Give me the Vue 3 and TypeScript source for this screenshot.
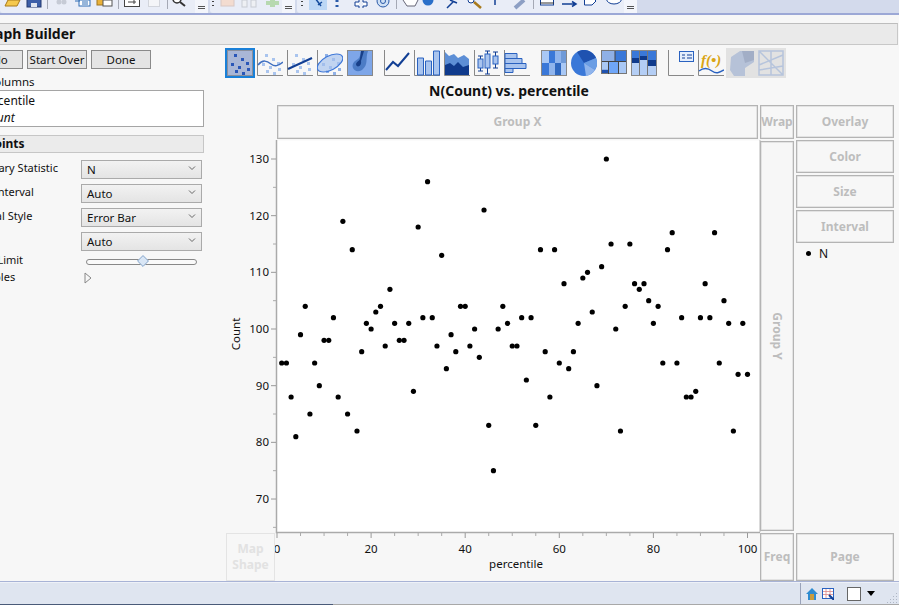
<script setup lang="ts">
const values: number[] = [94,94,88,81,99,104,85,94,90,98,98,102,88,119,85,114,82,96,101,100,103,104,97,107,101,98,98,101,89,118,102,126,102,97,113,93,99,96,104,104,97,100,95,121,83,75,100,104,101,97,97,102,91,102,83,114,96,88,114,94,108,93,96,101,109,110,103,90,111,130,115,100,82,104,115,108,107,108,105,101,104,94,114,117,94,102,88,88,89,102,108,102,117,94,105,101,82,92,101,92]
const px = (v: number) => 51 + v * 4.705
const py = (v: number) => 19 + (130 - v) * 5.667
const dots = values.map((v, i) => ({ x: px(i + 1), y: py(v) }))
const xMajor = [0, 20, 40, 60, 80, 100]
const xMinor = [5, 10, 15, 25, 30, 35, 45, 50, 55, 65, 70, 75, 85, 90, 95]
const yMajor = [70, 80, 90, 100, 110, 120, 130]
const yMinor = [65, 75, 85, 95, 105, 115, 125]
const selects = ['N', 'Auto', 'Error Bar', 'Auto']
const rowLabels = ['Summary Statistic', 'Error Interval', 'Interval Style', '']
const scatter: [number, number][] = [[8,5],[15,9],[5,14],[12,17],[20,13],[9,21],[16,23],[21,19]]
const stackSide = ['Overlay', 'Color', 'Size', 'Interval']
</script>

<template>
  <div class="app">
    <header class="toolbar">
      <div class="tb-group g1">
        <svg width="195" height="13" viewBox="0 0 195 13">
          <path d="M5 6 L8 0 H20 L17 6Z" fill="#f5c94e" stroke="#a87a1c"/>
          <rect x="27" y="-4" width="14" height="11" fill="#3d5fa8" stroke="#22386e"/>
          <rect x="31" y="3" width="6" height="4" fill="#dfe5f0"/>
          <line x1="47.5" y1="0" x2="47.5" y2="9" stroke="#a5a9b5"/>
          <circle cx="59" cy="2" r="2.5" fill="#c6cbd6"/><circle cx="64" cy="2" r="2.5" fill="#c6cbd6"/>
          <rect x="79" y="0" width="11" height="6" fill="#fff" stroke="#2f6db5"/><path d="M75 1H80M82 2H88M82 4H88" stroke="#2f6db5"/>
          <rect x="97" y="-3" width="8" height="8" fill="#eab23a" stroke="#a07620"/><rect x="103" y="0" width="9" height="6" fill="#fff" stroke="#555"/>
          <line x1="118.5" y1="0" x2="118.5" y2="9" stroke="#a5a9b5"/>
          <rect x="124.5" y="-3" width="15" height="9.500" fill="#fff" stroke="#444"/><path d="M128 2H136M134 0V4" stroke="#444"/>
          <rect x="148.500" y="-3" width="11" height="9.500" fill="#f4f5f8" stroke="#d2d5dc"/>
          <line x1="167.500" y1="0" x2="167.500" y2="9" stroke="#a5a9b5"/>
          <circle cx="177" cy="-1" r="4" fill="#fff" stroke="#333" stroke-width="1.500"/><path d="M180 2L185 6" stroke="#333" stroke-width="2"/>
        </svg>
        <span class="more"></span>
      </div>
      <div class="tb-group g2">
        <svg width="72" height="13" viewBox="0 0 72 13">
          <path d="M3 1V2M3 5V6" stroke="#444" stroke-width="2"/>
          <rect x="11" y="-3" width="13" height="9" fill="#f3dcd0" stroke="#d8c8c4"/>
          <rect x="32" y="0" width="5" height="7" fill="#eef0f4" stroke="#c8ccd4"/><rect x="41" y="0" width="5" height="7" fill="#eef0f4" stroke="#c8ccd4"/>
          <path d="M60 0H65V2H69V6H65V8H60V6H56V2H60Z" fill="#b7d9b0" transform="translate(0,-1)"/>
        </svg>
        <span class="more"></span>
      </div>
      <div class="tb-group g3">
        <svg width="327" height="13" viewBox="0 0 327 13">
          <path d="M5 1V2M5 5V6" stroke="#444" stroke-width="2"/>
          <rect x="12" y="-2" width="18" height="12" fill="#bcd7f5"/>
          <path d="M18 -2L24 6M21 5L25 2" fill="none" stroke="#134a9c" stroke-width="1.500"/>
          <path d="M40 0V2M40 5V7" stroke="#2a5aa8" stroke-width="3"/>
          <path d="M62 -2V2H58V6H62V8M66 8V6H70V2H66V-2" fill="#fff" stroke="#123f94"/>
          <circle cx="86" cy="1" r="6" fill="#cfe0f5" stroke="#2a5aa8"/><circle cx="86" cy="1" r="2.500" fill="none" stroke="#2a5aa8"/>
          <line x1="99.500" y1="0" x2="99.500" y2="9" stroke="#a5a9b5"/>
          <path d="M106 0L110 6H118L121 0" fill="#fff" stroke="#667"/>
          <circle cx="131" cy="0" r="5.500" fill="#2a6fc9"/>
          <path d="M150 8L156 2M153 0L160 3" stroke="#123f94" stroke-width="1.500" fill="none"/>
          <circle cx="174" cy="0" r="3" fill="#fff" stroke="#123f94"/><path d="M177 2L184 8" stroke="#a87a1c" stroke-width="2.500"/>
          <line x1="198" y1="-2" x2="198" y2="5" stroke="#123f94" stroke-width="1.500"/>
          <path d="M218 8L227 0" stroke="#8d9fc4" stroke-width="4"/>
          <line x1="236.500" y1="0" x2="236.500" y2="9" stroke="#a5a9b5"/>
          <rect x="243.500" y="-3" width="13" height="8" fill="#fff" stroke="#123f94"/><path d="M243 3H257" stroke="#333"/>
          <path d="M265 4H278M275 1.500L279 4L275 6.500" fill="none" stroke="#123f94" stroke-width="1.500"/>
          <path d="M287.500 -3H295L299 1L295 5H287.500Z" fill="#fff" stroke="#123f94"/>
          <ellipse cx="317" cy="-1" rx="7.500" ry="5" fill="#fff" stroke="#123f94"/>
        </svg>
        <span class="more"></span>
      </div>
    </header>

    <section class="title-bar"><span>Graph Builder</span></section>

    <main class="workspace">
      <aside class="side">
        <div class="btns">
          <button class="btn undo">Undo</button>
          <button class="btn">Start Over</button>
          <button class="btn">Done</button>
        </div>
        <div class="cols-label">Select Columns</div>
        <div class="cols-box">
          <div>percentile</div>
          <div class="ital">Count</div>
        </div>
        <div class="section">Points</div>
        <div class="form">
          <template v-for="(s, i) in selects" :key="i">
            <label>{{ rowLabels[i] }}</label>
            <div class="select">
              <span>{{ s }}</span>
              <svg width="8" height="5" viewBox="0 0 8 5"><path d="M1 .5L4 3.500L7 .5" fill="none" stroke="#666"/></svg>
            </div>
          </template>
        </div>
        <div class="extra">
          <label class="l1">Jitter Limit</label>
          <div class="slider"><span class="thumb"></span></div>
          <label class="l2">Variables</label>
          <svg class="tri" width="8" height="12" viewBox="0 0 8 12"><path d="M1 1L7 6L1 11Z" fill="#f7f7f7" stroke="#888"/></svg>
        </div>
      </aside>

      <div class="graph">
        <div class="palette">
          <svg class="ic sel" viewBox="0 0 30 30" width="30" height="30">
            <rect x="1" y="1" width="28" height="28" fill="#a9b6d6" stroke="#1a80d8" stroke-width="2"/>
            <rect x="2.500" y="2.500" width="25" height="25" fill="none" stroke="#8a8f9c"/>
            <rect v-for="(p,i) in scatter" :key="i" :x="p[0]+1" :y="p[1]+1" width="3" height="3" fill="#2a56b8"/>
          </svg>
          <svg class="ic" viewBox="0 0 26 26">
            <path d="M.5 0V25.500H26" class="ax"/>
            <rect v-for="(p,i) in scatter" :key="i" :x="p[0]" :y="p[1]-1" width="3" height="3" fill="#a9c4ee"/>
            <path d="M1 15C6 9 10 11 14 14S21 16 26 12" fill="none" stroke="#3f6fc0" stroke-width="1.500"/>
          </svg>
          <svg class="ic" viewBox="0 0 26 26">
            <path d="M.5 0V25.500H26" class="ax"/>
            <rect v-for="(p,i) in scatter" :key="i" :x="p[0]" :y="p[1]-1" width="3" height="3" fill="#a9c4ee"/>
            <path d="M1 19L25 8" stroke="#123f94" stroke-width="2"/>
          </svg>
          <svg class="ic" viewBox="0 0 26 26">
            <path d="M.5 0V25.500H26" class="ax"/>
            <rect v-for="(p,i) in scatter" :key="i" :x="p[0]" :y="p[1]-1" width="3" height="3" fill="#8fb0e6"/>
            <ellipse cx="13" cy="13" rx="14" ry="7" transform="rotate(-28 13 13)" fill="#a9c4ee" fill-opacity=".7" stroke="#3f78d8" stroke-width="1.200"/>
          </svg>
          <svg class="ic" viewBox="0 0 26 26">
            <rect x=".5" y=".5" width="25" height="25" fill="#7ea6e8" stroke="#888"/>
            <path d="M21 1C18 9 22 14 15 20C8 24 3 17 7 12C10 9 13 10 14 1Z" fill="#4c7cc6"/>
            <path d="M17 1L14 11C15 17 9 18 9 14C10 11 13 11 13 8L14 1Z" fill="#173f88"/>
          </svg>
          <span class="sp"></span>
          <svg class="ic" viewBox="0 0 26 26">
            <path d="M.5 0V25.500H26" class="ax"/>
            <path d="M2 20L9 12L14 16L25 3" fill="none" stroke="#123f94" stroke-width="2"/>
          </svg>
          <svg class="ic" viewBox="0 0 26 26">
            <path d="M.5 0V25.500H26" class="ax"/>
            <path d="M3.500 25V8H9.500V25ZM11.500 25V11H17.500V25ZM19.500 25V1H25.500V25Z" fill="#a9c4ee" stroke="#2a62c0"/>
          </svg>
          <svg class="ic" viewBox="0 0 26 26">
            <path d="M.5 0V25.500H26" class="ax"/>
            <path d="M1 2L5 6L10 4L14 8L20 5L25 9V25H1Z" fill="#5d8fd6"/>
            <path d="M1 15L6 13L10 16L14 12L19 17L25 15V25H1Z" fill="#0f3a8c"/>
          </svg>
          <svg class="ic" viewBox="0 0 26 26">
            <path d="M.5 0V25.500H26" class="ax"/>
            <path d="M6.500 6V21M13.500 1V24M21.500 2V18M4 6H9M4 21H9M11 1H16M11 24H16M19 2H24M19 18H24" stroke="#123f94"/>
            <rect x="4" y="9" width="5" height="9" fill="#a9c4ee" stroke="#2a62c0"/>
            <rect x="11" y="4" width="5" height="14" fill="#a9c4ee" stroke="#2a62c0"/>
            <rect x="19" y="6" width="5" height="8" fill="#a9c4ee" stroke="#2a62c0"/>
          </svg>
          <svg class="ic" viewBox="0 0 26 26">
            <path d="M.5 0V25.500H26" class="ax"/>
            <path d="M1 3.500H13V8.500H1ZM1 8.500H18V13.500H1ZM1 13.500H22V18.500H1ZM1 18.500H9V22.500H1Z" fill="#a9c4ee" stroke="#2a62c0"/>
          </svg>
          <span class="sp"></span>
          <svg class="ic" viewBox="0 0 26 26">
            <rect x=".5" y=".5" width="25" height="25" fill="#a9c8f5" stroke="#888"/>
            <rect x="8" y="1" width="6" height="12" fill="#3a78d8"/><rect x="14" y="1" width="6" height="12" fill="#8fb4ec"/><rect x="20" y="1" width="5" height="12" fill="#6f9ad8"/>
            <rect x="1" y="13" width="7" height="12" fill="#3a78d8"/><rect x="8" y="13" width="6" height="12" fill="#8fb4ec"/><rect x="14" y="13" width="6" height="12" fill="#2f68c0"/><rect x="20" y="13" width="5" height="12" fill="#a9c8f5"/>
          </svg>
          <svg class="ic" viewBox="0 0 26 26">
            <circle cx="13" cy="13" r="13" fill="#3a78d8"/>
            <path d="M13 13L6 2A13 13 0 0 1 25 8Z" fill="#1f52b0"/>
            <path d="M13 13L25 8A13 13 0 0 1 24 20Z" fill="#6a9de4"/>
            <path d="M13 13L24 20A13 13 0 0 1 15 26Z" fill="#8fb4ec"/>
          </svg>
          <svg class="ic" viewBox="0 0 26 26">
            <rect x=".5" y=".5" width="25" height="23" fill="#8fb0e6" stroke="#777"/>
            <rect x="14" y="1" width="11" height="10" fill="#3a78d8"/>
            <rect x="8" y="12" width="9" height="11" fill="#6fa6f8"/>
            <rect x="1" y="12" width="6" height="7" fill="#a9c8f5"/>
            <rect x="1" y="20" width="6" height="3" fill="#1f52b0"/>
            <rect x="18" y="12" width="7" height="11" fill="#a9c8f5"/>
            <path d="M1 11.500H25M14 1V11M7.500 12V24M17.500 12V24" stroke="#444" fill="none"/>
          </svg>
          <svg class="ic" viewBox="0 0 26 26">
            <rect x=".5" y=".5" width="25" height="25" fill="#b4cef5" stroke="#888"/>
            <rect x="1" y="1" width="7" height="7" fill="#3a78d8"/><rect x="1" y="8" width="7" height="5" fill="#0f3a8c"/>
            <rect x="9" y="1" width="7" height="5" fill="#3a78d8"/><rect x="9" y="6" width="7" height="4" fill="#0f3a8c"/>
            <rect x="17" y="1" width="8" height="9" fill="#3a78d8"/><rect x="17" y="10" width="8" height="6" fill="#0f3a8c"/>
            <path d="M8.500 1V25M16.500 1V25" stroke="#777"/>
          </svg>
          <span class="sp"></span>
          <svg class="ic" viewBox="0 0 26 26">
            <path d="M.5 0V25.500H26" class="ax"/>
            <rect x="11.500" y="1.500" width="14" height="10" fill="#e4eefc" stroke="#2a62c0"/>
            <path d="M14 5H17M14 8H17M19 5H24M19 8H24" stroke="#123f94"/>
          </svg>
          <svg class="ic" viewBox="0 0 26 26">
            <path d="M.5 0V25.500H26" class="ax"/>
            <text x="3" y="15" class="fx">f(•)</text>
            <path d="M1 21C6 17 10 18 14 21S21 23 26 20" fill="none" stroke="#2a62c0" stroke-width="1.500"/>
          </svg>
          <div class="disabled">
            <svg class="ic" viewBox="0 0 26 26">
              <path d="M3 7L12 1H26V12L17 18V26H6L2 20Z" fill="#b6c2d8"/>
              <path d="M14 1H26V10L17 13Z" fill="#a2aec6"/>
            </svg>
            <svg class="ic" viewBox="0 0 26 26">
              <path d="M1 1H25V25H1ZM13 1V25M1 1L25 25M1 15L25 5M1 20L25 16" fill="none" stroke="#b6c4dc" stroke-width="1.500"/>
            </svg>
          </div>
        </div>

        <h2 class="chart-title">N(Count) vs. percentile</h2>

        <div class="grid">
          <div class="zone gx">Group X</div>
          <div class="zone wrap">Wrap</div>
          <div class="right-stack">
            <div v-for="z in stackSide" :key="z" class="zone">{{ z }}</div>
            <div class="legend"><i></i><span>N</span></div>
          </div>
          <svg class="plot" width="536" height="441" viewBox="0 0 536 441">
            <rect x="50.500" y="0.500" width="483" height="392" fill="#fff"/>
            <path d="M50.500 0V392.500H534" fill="none" stroke="#aaa" stroke-width="1.500"/>
            <path d="M534 0V392" stroke="#bbb" fill="none"/>
            <path v-for="v in xMajor" :key="'a'+v" :d="`M${px(v)} 393V398`" stroke="#999"/>
            <path v-for="v in xMinor" :key="'b'+v" :d="`M${px(v)} 393V396`" stroke="#aaa"/>
            <path v-for="v in yMajor" :key="'c'+v" :d="`M45 ${py(v)}H50`" stroke="#999"/>
            <path v-for="v in yMinor" :key="'d'+v" :d="`M47 ${py(v)}H50`" stroke="#aaa"/>
            <text v-for="v in xMajor" :key="'e'+v" :x="px(v)" y="413" text-anchor="middle" class="tk">{{ v }}</text>
            <text v-for="v in yMajor" :key="'f'+v" x="43" :y="py(v)+4" text-anchor="end" class="tk">{{ v }}</text>
            <text x="290" y="428" text-anchor="middle" class="tk">percentile</text>
            <text transform="translate(14 194) rotate(-90)" text-anchor="middle" class="tk">Count</text>
            <circle v-for="(d,i) in dots" :key="i" :cx="d.x" :cy="d.y" r="2.600" fill="#000"/>
          </svg>
          <div class="zone gy"><span>Group Y</span></div>
          <div class="zone map">Map<br>Shape</div>
          <div class="zone freq">Freq</div>
          <div class="zone page">Page</div>
        </div>
      </div>
    </main>

    <footer class="status">
      <div class="status-main">
        <span class="status-sep"></span>
        <svg width="12" height="12" viewBox="0 0 12 12">
          <path d="M0 6L6 0L12 6H10V12H2V6Z" fill="#2d8bd0"/>
          <rect x="4" y="6" width="4" height="6" fill="#c89b3c"/>
        </svg>
        <svg class="st-grid" width="12" height="12" viewBox="0 0 12 12">
          <rect x=".5" y=".5" width="11" height="10" fill="#fff" stroke="#2a62c0"/>
          <path d="M1 3.500H11M1 6.500H11M4 1V10M8 1V10" stroke="#d88" stroke-width=".8"/>
          <path d="M7 7L12 12" stroke="#123f94" stroke-width="2"/>
        </svg>
        <span class="swatch"></span>
        <span class="down"></span>
        <svg class="grip" width="11" height="11" viewBox="0 0 11 11">
          <path d="M9 1h1v1H9zM6 4h1v1H6zM9 4h1v1H9zM3 7h1v1H3zM6 7h1v1H6zM9 7h1v1H9zM0 10h1v1H0zM3 10h1v1H3zM6 10h1v1H6zM9 10h1v1H9z" fill="#aeb6c4"/>
        </svg>
      </div>
      <div class="edge"><span></span></div>
    </footer>
  </div>
</template>

<style>
html, body { margin: 0; padding: 0; }
</style>

<style scoped>
.app {
  width: 899px;
  height: 605px;
  overflow: hidden;
  display: flex;
  flex-direction: column;
  background: #f7f7f7;
  font-family: "Noto Sans", "Open Sans", sans-serif;
  font-size: 11px;
  color: #111;
}
.toolbar {
  height: 13px;
  flex: none;
  display: flex;
  gap: 2px;
  background: #d3daec;
  border-bottom: 2px solid #9ca8d6;
  overflow: hidden;
}
.tb-group {
  display: flex;
  justify-content: space-between;
  background: #e9edf7;
  border-radius: 0 0 3px 3px;
  height: 13px;
}
.g1 { width: 208px; }
.g2 { width: 85px; }
.g3 { width: 340px; }
.tb-group svg { flex: none; }
.more {
  width: 13px;
  flex: none;
  background: #f3f5fb;
  position: relative;
}
.more::after {
  content: "";
  position: absolute;
  left: 3px;
  top: 6px;
  width: 7px;
  height: 1px;
  background: #555;
  box-shadow: 0 2px 0 #555;
}
.title-bar {
  flex: none;
  margin-top: 8px;
  margin-right: 1px;
  height: 19px;
  padding-bottom: 1px;
  border-top: 1px solid #bdbdbd;
  border-bottom: 1px solid #c8c8c8;
  border-right: 1px solid #c8c8c8;
  background: #eaeaea;
  overflow: hidden;
  display: flex;
  align-items: center;
}
.title-bar span {
  margin-left: -21px;
  font-size: 14px;
  font-weight: 700;
  white-space: nowrap;
}
.workspace {
  flex: 1;
  min-height: 0;
  display: flex;
}
.side {
  flex: none;
  width: 245px;
  margin-left: -40px;
  margin-right: 21px;
  padding-top: 5px;
}
.btns { display: flex; gap: 4px; padding-left: 3px; }
.btn {
  box-sizing: border-box;
  width: 60px;
  height: 19px;
  padding: 0;
  border: 1px solid #8a8a8a;
  background: #e4e4e4;
  font: 11.5px "Noto Sans", sans-serif;
  color: #111;
  white-space: nowrap;
}
.cols-label { margin: 4px 0 0 -8px; height: 17px; line-height: 17px; font-size: 11.5px; white-space: nowrap; }
.cols-box {
  box-sizing: border-box;
  width: 244px;
  height: 37px;
  border: 1px solid #a5a5a5;
  background: #fff;
  padding: 1px 0 0 18px;
  line-height: 17px;
  font-size: 12px;
}
.ital { font-style: italic; margin-left: 4px; }
.section {
  box-sizing: border-box;
  width: 244px;
  margin-top: 8px;
  height: 18px;
  border: 1px solid #c6c6c6;
  background: #ebebeb;
  font-weight: 700;
  font-size: 12px;
  line-height: 16px;
  padding-left: 26px;
  white-space: nowrap;
}
.form {
  margin-top: 7px;
  display: grid;
  grid-template-columns: 121px 121px;
  row-gap: 5px;
  align-items: center;
}
.form label { padding-left: 5px; white-space: nowrap; margin-top: -4px; }
.select {
  box-sizing: border-box;
  height: 19px;
  border: 1px solid #aaa;
  background: linear-gradient(#f2f2f2, #e4e4e4);
  display: flex;
  align-items: center;
  justify-content: space-between;
  padding: 0 5px;
  font-size: 11.5px;
}
.select svg { margin-top: -3px; }
.extra {
  margin-top: 3px;
  display: grid;
  grid-template-columns: 126px 111px;
  grid-auto-rows: 16px;
  align-items: center;
}
.extra label { white-space: nowrap; }
.l1 { padding-left: 10px; margin-top: -6px; }
.l2 { padding-left: 8px; margin-top: -4px; }
.slider {
  box-sizing: border-box;
  height: 6px;
  border: 1px solid #888;
  border-radius: 3px;
  background: #fafafa;
  position: relative;
}
.thumb {
  position: absolute;
  left: 51px;
  top: -4px;
  width: 8px;
  height: 8px;
  border: 1px solid #7f9fc4;
  background: #d9e6f5;
  transform: rotate(45deg) scale(.85);
}
.tri { margin-left: -2px; }

.graph {
  flex: none;
  width: 669px;
  padding-top: 3px;
  box-sizing: border-box;
}
.palette {
  display: flex;
  align-items: center;
  gap: 4px;
  height: 30px;
}
.ic { width: 26px; height: 26px; flex: none; }
.ic.sel { width: 30px; height: 30px; margin-left: -1px; margin-right: -2px; }
.ax { fill: none; stroke: #888; stroke-width: 1; }
.sp { width: 3px; flex: none; }
.disabled {
  display: flex;
  gap: 4px;
  padding: 2px;
  margin-left: -2px;
  background: #e2e2e2;
}
.fx { font: italic 700 15px "Liberation Serif", serif; fill: #d9a514; }
.chart-title {
  margin: 0;
  height: 27px;
  line-height: 25px;
  text-align: center;
  font-size: 14px;
  font-weight: 700;
  width: 566px;
}
.grid {
  display: grid;
  grid-template-columns: 49px 481px 34px 98px;
  grid-template-rows: 34px 390px 48px;
  gap: 2px;
  height: 476px;
}
.zone {
  box-sizing: border-box;
  border: 1px solid #b4b4b4;
  box-shadow: inset 0 0 0 .5px #d0d0d0;
  color: #bdbdbd;
  font-weight: 700;
  font-size: 12px;
  display: flex;
  align-items: center;
  justify-content: center;
  text-align: center;
  background: #f7f7f7;
  line-height: 18px;
}
.gx { grid-column: 2; grid-row: 1; }
.wrap { grid-column: 3; grid-row: 1; white-space: nowrap; overflow: hidden; }
.right-stack {
  grid-column: 4;
  grid-row: 1 / span 2;
  display: flex;
  flex-direction: column;
  gap: 2px;
}
.right-stack .zone { height: 33px; flex: none; }
.legend {
  margin-top: 1px;
  display: flex;
  align-items: center;
  gap: 8px;
  padding-left: 10px;
  font-size: 12px;
  height: 14px;
  color: #111;
}
.legend i { width: 5px; height: 5px; border-radius: 50%; background: #000; }
.plot {
  grid-column: 1 / span 2;
  grid-row: 2 / span 2;
  overflow: visible;
  margin-top: -1px;
}
.tk { font-family: "Noto Sans", sans-serif; font-size: 11.5px; fill: #111; }
.gy { grid-column: 3; grid-row: 2; }
.gy span { transform: rotate(90deg); white-space: nowrap; }
.map {
  grid-column: 1;
  grid-row: 3;
  color: #e2e2e2;
  border-color: #e4e4e4;
  box-shadow: none;
  background: transparent;
  z-index: 1;
  line-height: 16px;
}
.freq { grid-column: 3; grid-row: 3; }
.page { grid-column: 4; grid-row: 3; }

.status { flex: none; height: 24px; display: flex; flex-direction: column; border-top: 1px solid #a8b3d6; box-sizing: border-box; }
.status-main {
  flex: 1;
  background: #dfe5f0;
  border-top: 1px solid #eef1f8;
  display: flex;
  align-items: center;
  padding-left: 800px;
  position: relative;
}
.status-sep { width: 1px; height: 100%; background: #9aa3ba; margin-right: 5px; }
.st-grid { margin-left: 4px; }
.swatch { box-sizing: border-box; width: 14px; height: 14px; background: #fff; border: 1px solid #666; margin-left: 13px; }
.down {
  width: 0; height: 0;
  margin-left: 6px;
  border-left: 4px solid transparent;
  border-right: 4px solid transparent;
  border-top: 5px solid #000;
}
.grip { position: absolute; right: 1px; bottom: 1px; }
.edge { height: 1px; background: #a8a8a8; flex: none; }
.edge span { display: block; width: 333px; height: 1px; background: #4a5a78; }
</style>
